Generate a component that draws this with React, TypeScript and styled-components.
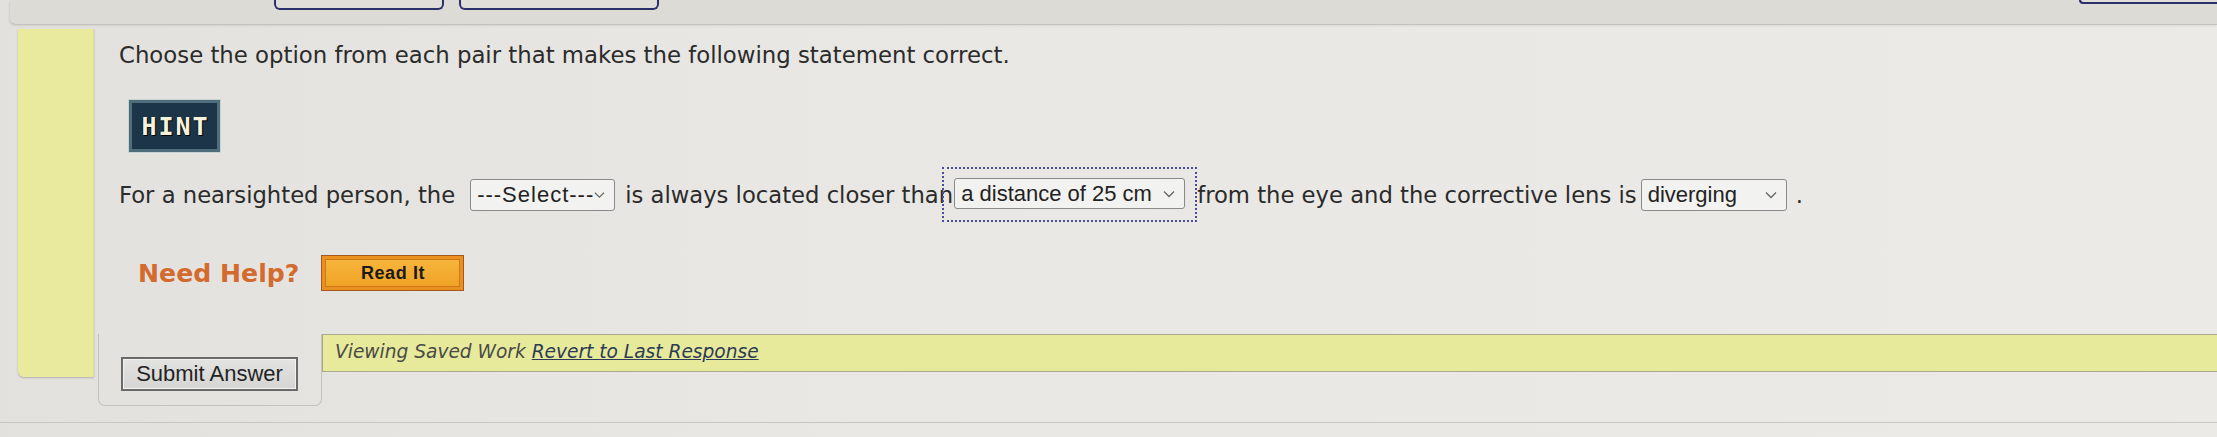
import React from "react";
import styled, { createGlobalStyle } from "styled-components";

const GlobalStyle = createGlobalStyle`
  html, body { margin: 0; padding: 0; background: #e6e5e1; }
  body { font-family: "DejaVu Sans", Verdana, sans-serif; color: #2b2b2b; }
  * { box-sizing: border-box; }
`;

const Page = styled.div`
  width: 2217px;
  height: 437px;
  overflow: hidden;
  background: linear-gradient(90deg, #e2e1dd 0%, #e8e7e3 35%, #ebeae6 100%);
  display: flex;
  flex-direction: column;
`;

const TopBand = styled.div`
  height: 25px;
  margin-left: 10px;
  background: #dcdbd6;
  border-bottom: 1px solid #c3c2bd;
  border-bottom-left-radius: 6px;
  box-shadow: -1px 1px 2px rgba(0, 0, 0, 0.08);
  display: flex;
  align-items: flex-start;
`;

const TabStub = styled.div<{ $w: number; $h: number; $ml: string; $open?: boolean }>`
  width: ${(p) => p.$w}px;
  height: ${(p) => p.$h}px;
  margin-left: ${(p) => p.$ml};
  border: 2px solid #2b2f6b;
  border-top: none;
  ${(p) => (p.$open ? "border-right: none;" : "")}
  border-radius: ${(p) => (p.$open ? "0 0 0 6px" : "0 0 6px 6px")};
  background: #dfded9;
  flex: none;
`;

const Main = styled.div`
  display: flex;
  align-items: flex-start;
  margin-top: 4px;
  margin-left: 18px;
`;

const NumberStrip = styled.div`
  width: 76px;
  height: 348px;
  flex: none;
  background: #eaea9f;
  border-bottom-left-radius: 6px;
  box-shadow: 0 1px 2px rgba(0, 0, 0, 0.22), inset -1px 0 0 rgba(0, 0, 0, 0.06);
`;

const Body = styled.div`
  flex: 1;
  display: flex;
  flex-direction: column;
`;

const Content = styled.div`
  padding-left: 25px;
  display: flex;
  flex-direction: column;
  align-items: flex-start;
`;

const Prompt = styled.p`
  margin: 11px 0 0;
  font-size: 22.8px;
  line-height: 30px;
  color: #2b2b2b;
`;

const HintButton = styled.div`
  margin: 30px 0 0 10px;
  width: 91px;
  height: 52px;
  background: #1c3549;
  border: 3px solid #4e6e7c;
  outline: 1px solid #c9d2d3;
  display: flex;
  align-items: center;
  justify-content: center;
  padding-left: 2px;
  font-family: "DejaVu Sans Mono", monospace;
  font-weight: bold;
  font-size: 25px;
  letter-spacing: 2px;
  color: #f6f3dc;
  text-shadow: 1px 1px 0 #000, -1px 0 0 rgba(0, 0, 0, 0.5);
`;

const SentenceRow = styled.div`
  margin-top: 15px;
  height: 55px;
  display: flex;
  align-items: center;
  font-size: 22.7px;
  line-height: 30px;
  white-space: nowrap;
`;

const Words = styled.span<{ $ml?: number }>`
  margin-left: ${(p) => p.$ml ?? 0}px;
  flex: none;
`;

const FocusRing = styled.div<{ $ml?: number }>`
  margin-left: ${(p) => p.$ml ?? 0}px;
  padding: 9px 10px 11px;
  border: 2px dotted #4b4b9c;
  flex: none;
  display: flex;
`;

const SelectBox = styled.div<{ $w: number; $h: number; $ml?: number }>`
  width: ${(p) => p.$w}px;
  height: ${(p) => p.$h}px;
  margin-left: ${(p) => p.$ml ?? 0}px;
  flex: none;
  border: 1px solid #8a8a8a;
  border-radius: 3px;
  background: #f2f2f0;
  display: flex;
  align-items: center;
  justify-content: space-between;
  padding: 0 9px 0 6px;
  font-family: "Liberation Sans", Arial, sans-serif;
  font-size: 22px;
  color: #222;
`;

const SelectText = styled.span<{ $ls?: number }>`
  letter-spacing: ${(p) => p.$ls ?? 0}px;
`;

const Chevron = () => (
  <svg width="12" height="8" viewBox="0 0 12 8" aria-hidden="true">
    <polyline points="1,1.5 6,6.5 11,1.5" fill="none" stroke="#666" strokeWidth="1.3" />
  </svg>
);

const HelpRow = styled.div`
  margin-top: 33px;
  display: flex;
  align-items: center;
`;

const NeedHelp = styled.span`
  margin-left: 19px;
  font-family: "DejaVu Sans", Verdana, sans-serif;
  font-weight: bold;
  font-size: 25.2px;
  color: #d46b2e;
`;

const ReadIt = styled.button`
  margin: 0 0 0 22px;
  width: 143px;
  height: 36px;
  padding: 3px;
  border: 1px solid #a4581f;
  background: #ea901e;
  display: flex;
  cursor: pointer;
`;

const ReadItFace = styled.span`
  flex: 1;
  display: flex;
  align-items: center;
  justify-content: center;
  border: 1px solid #cf781b;
  background: linear-gradient(#f7b53c, #efa225);
  font-family: "Liberation Sans", Arial, sans-serif;
  font-weight: bold;
  font-size: 18px;
  letter-spacing: 0.6px;
  color: #1a1a1a;
`;

const Footer = styled.div`
  margin: 43px 0 0 4px;
  display: flex;
  align-items: flex-start;
`;

const SubmitCard = styled.div`
  width: 224px;
  height: 72px;
  flex: none;
  border: 1px solid #c2c1bc;
  border-top: none;
  border-radius: 0 0 7px 7px;
  padding: 23px 0 0 22px;
`;

const SubmitButton = styled.button`
  width: 177px;
  height: 34px;
  margin: 0;
  padding: 0;
  border: 2px solid #6a6a6a;
  background: linear-gradient(#e3e3e1, #d5d5d3);
  box-shadow: inset 0 0 0 1px #f2f2f2;
  font-family: "Liberation Sans", Arial, sans-serif;
  font-size: 22px;
  color: #232323;
  cursor: pointer;
`;

const SavedBar = styled.div`
  flex: 1;
  height: 38px;
  background: #e7ea9b;
  border: 1px solid #a8a98c;
  border-right: none;
  padding: 5px 0 0 12px;
  font-family: "DejaVu Sans", Verdana, sans-serif;
  font-style: italic;
  font-size: 18.6px;
  line-height: 24px;
  color: #4a4a48;
  white-space: nowrap;
`;

const RevertLink = styled.a`
  color: #2d3a55;
  text-decoration: underline;
  cursor: pointer;
`;

const BottomRule = styled.div`
  margin-top: 16px;
  border-top: 1px solid #c8c7c2;
`;

export default function App() {
  return (
    <>
      <GlobalStyle />
      <Page>
        <TopBand>
          <TabStub $w={170} $h={10} $ml="264px" />
          <TabStub $w={200} $h={10} $ml="15px" />
          <TabStub $w={138} $h={4} $ml="auto" $open />
        </TopBand>
        <Main>
          <NumberStrip />
          <Body>
            <Content>
              <Prompt>Choose the option from each pair that makes the following statement correct.</Prompt>
              <HintButton>HINT</HintButton>
              <SentenceRow>
                <Words>For a nearsighted person, the</Words>
                <SelectBox $w={145} $h={32} $ml={15}>
                  <SelectText $ls={1}>---Select---</SelectText>
                  <Chevron />
                </SelectBox>
                <Words $ml={10}>is always located closer than</Words>
                <FocusRing $ml={-11}>
                  <SelectBox $w={231} $h={31}>
                    <SelectText>a distance of 25 cm</SelectText>
                    <Chevron />
                  </SelectBox>
                </FocusRing>
                <Words>from the eye and the corrective lens is</Words>
                <SelectBox $w={146} $h={32} $ml={4}>
                  <SelectText>diverging</SelectText>
                  <Chevron />
                </SelectBox>
                <Words $ml={9}>.</Words>
              </SentenceRow>
              <HelpRow>
                <NeedHelp>Need Help?</NeedHelp>
                <ReadIt type="button">
                  <ReadItFace>Read It</ReadItFace>
                </ReadIt>
              </HelpRow>
            </Content>
            <Footer>
              <SubmitCard>
                <SubmitButton type="button">Submit Answer</SubmitButton>
              </SubmitCard>
              <SavedBar>
                Viewing Saved Work <RevertLink>Revert to Last Response</RevertLink>
              </SavedBar>
            </Footer>
          </Body>
        </Main>
        <BottomRule />
      </Page>
    </>
  );
}
